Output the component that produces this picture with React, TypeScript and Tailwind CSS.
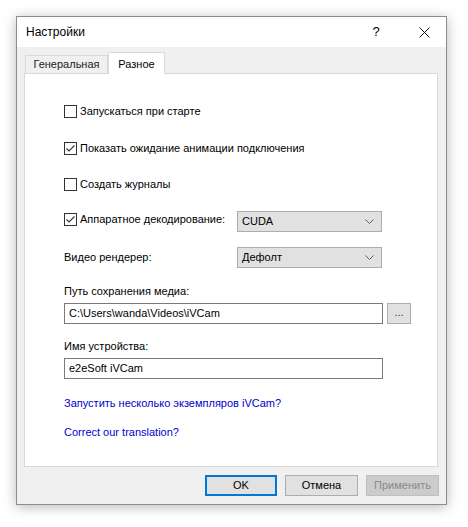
import React from 'react'

const FONT = { fontFamily: '"Liberation Sans", Arial, sans-serif' }

function CheckBox({ checked, label }: { checked?: boolean; label: string }) {
  return (
    <div className="flex items-center h-[13px]">
      <div className="w-[13px] h-[13px] border border-[#333333] bg-white flex items-center justify-center shrink-0">
        {checked && (
          <svg width="11" height="11" viewBox="0 0 11 11">
            <path d="M1.5 5.5 L4 8 L9.5 2.5" fill="none" stroke="#333333" strokeWidth="1.1" />
          </svg>
        )}
      </div>
      <span className="ml-[3px] whitespace-nowrap">{label}</span>
    </div>
  )
}

function Combo({ value }: { value: string }) {
  return (
    <div className="w-[145px] h-[21px] bg-[#e1e1e1] border border-[#adadad] flex items-center justify-between pl-[4px] pr-[7px]">
      <span>{value}</span>
      <svg width="9" height="5" viewBox="0 0 9 5">
        <path d="M0.5 0.5 L4.5 4.5 L8.5 0.5" fill="none" stroke="#606060" strokeWidth="1" />
      </svg>
    </div>
  )
}

function Field({ value }: { value: string }) {
  return (
    <div className="w-[319px] h-[21px] bg-white border border-[#7a7a7a] flex items-center pl-[4px]">
      {value}
    </div>
  )
}

export default function App() {
  return (
    <div className="w-[468px] h-[527px] bg-white pl-[16px] pt-[16px] text-[11px] text-black" style={FONT}>
      <div className="w-[431px] h-[489px] border border-[#8c8c8c] bg-[#f0f0f0] flex flex-col shadow-[0_2px_12px_rgba(0,0,0,0.28)]">
        {/* title bar */}
        <div className="h-[30px] bg-white flex items-center pl-[9px] shrink-0">
          <span className="flex-1 text-[12px]">Настройки</span>
          <span className="w-[20px] text-center text-[13px] mr-[33px]">?</span>
          <svg width="11" height="11" viewBox="0 0 11 11" className="mr-[16px]">
            <path d="M0.5 0.5 L10.5 10.5 M10.5 0.5 L0.5 10.5" stroke="#111" strokeWidth="1" />
          </svg>
        </div>

        {/* tabs */}
        <div className="flex items-end h-[21px] mt-[5px] ml-[8px] shrink-0">
          <div className="w-[83px] h-[18px] border border-b-0 border-[#d9d9d9] bg-[#f0f0f0] flex items-center justify-center text-[#1a1a1a]">
            Генеральная
          </div>
          <div className="relative z-10 -mb-px w-[57px] h-[22px] border border-b-0 border-[#d9d9d9] bg-white flex items-start pt-[3px] justify-center">
            Разное
          </div>
        </div>

        {/* panel */}
        <div className="ml-[7px] w-[414px] h-[394px] border border-[#d9d9d9] bg-white pl-[39px] flex flex-col shrink-0">
          <div className="mt-[31px]">
            <CheckBox label="Запускаться при старте" />
          </div>
          <div className="mt-[24px]">
            <CheckBox checked label="Показать ожидание анимации подключения" />
          </div>
          <div className="mt-[23px]">
            <CheckBox label="Создать журналы" />
          </div>
          <div className="mt-[20px] flex items-center h-[21px]">
            <div className="w-[173px] mb-[4px]">
              <CheckBox checked label="Аппаратное декодирование:" />
            </div>
            <Combo value="CUDA" />
          </div>
          <div className="mt-[15px] flex items-center h-[21px]">
            <span className="w-[173px]">Видео рендерер:</span>
            <Combo value="Дефолт" />
          </div>
          <div className="mt-[15px] h-[16px] leading-[16px]">Путь сохранения медиа:</div>
          <div className="mt-[4px] flex items-center">
            <Field value="C:\Users\wanda\Videos\iVCam" />
            <div className="ml-[4px] w-[24px] h-[21px] bg-[#e1e1e1] border border-[#adadad] flex items-center justify-center text-[#333] text-[11px] leading-none pb-[2px]">
              ...
            </div>
          </div>
          <div className="mt-[14px] h-[16px] leading-[16px]">Имя устройства:</div>
          <div className="mt-[4px]">
            <Field value="e2eSoft iVCam" />
          </div>
          <div className="mt-[16px] h-[16px] leading-[16px] text-[#0000d0]">Запустить несколько экземпляров iVCam?</div>
          <div className="mt-[13px] h-[16px] leading-[16px] text-[#0000d0]">Correct our translation?</div>
        </div>

        {/* buttons */}
        <div className="flex justify-end gap-[8px] pr-[7px] mt-[8px]">
          <div className="w-[72px] h-[21px] border-2 border-[#0078d7] bg-[#e1e1e1] flex items-center justify-center">OK</div>
          <div className="w-[73px] h-[21px] border border-[#adadad] bg-[#e1e1e1] flex items-center justify-center">Отмена</div>
          <div className="w-[73px] h-[21px] border border-[#bfbfbf] bg-[#cccccc] flex items-center justify-center text-[#8a8a8a]">Применить</div>
        </div>
      </div>
    </div>
  )
}
